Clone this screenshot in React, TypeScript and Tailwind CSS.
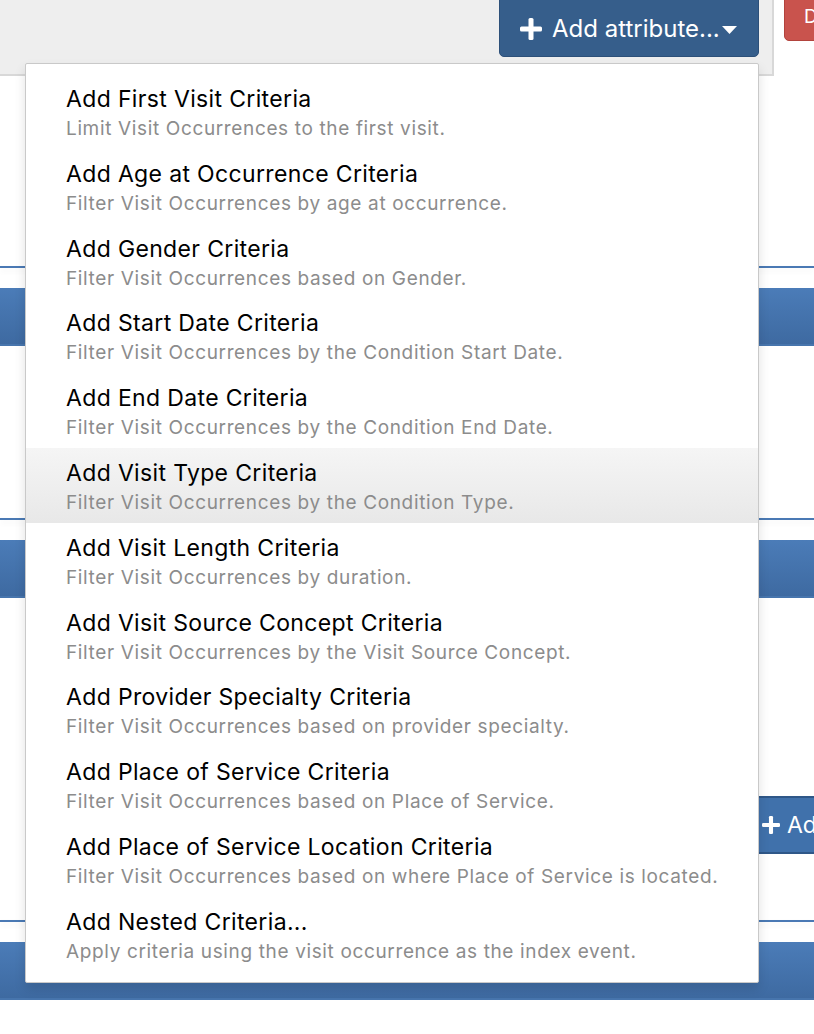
import React from 'react';

const items: { title: string; desc: string; active?: boolean }[] = [
  { title: 'Add First Visit Criteria', desc: 'Limit Visit Occurrences to the first visit.' },
  { title: 'Add Age at Occurrence Criteria', desc: 'Filter Visit Occurrences by age at occurrence.' },
  { title: 'Add Gender Criteria', desc: 'Filter Visit Occurrences based on Gender.' },
  { title: 'Add Start Date Criteria', desc: 'Filter Visit Occurrences by the Condition Start Date.' },
  { title: 'Add End Date Criteria', desc: 'Filter Visit Occurrences by the Condition End Date.' },
  { title: 'Add Visit Type Criteria', desc: 'Filter Visit Occurrences by the Condition Type.', active: true },
  { title: 'Add Visit Length Criteria', desc: 'Filter Visit Occurrences by duration.' },
  { title: 'Add Visit Source Concept Criteria', desc: 'Filter Visit Occurrences by the Visit Source Concept.' },
  { title: 'Add Provider Specialty Criteria', desc: 'Filter Visit Occurrences based on provider specialty.' },
  { title: 'Add Place of Service Criteria', desc: 'Filter Visit Occurrences based on Place of Service.' },
  { title: 'Add Place of Service Location Criteria', desc: 'Filter Visit Occurrences based on where Place of Service is located.' },
  { title: 'Add Nested Criteria...', desc: 'Apply criteria using the visit occurrence as the index event.' },
];

const PlusIcon: React.FC<{ size?: number }> = ({ size = 22 }) => (
  <svg width={size} height={size} viewBox="0 0 22 22" fill="white">
    <rect x="8.5" y="0" width="5" height="22" rx="1.5" />
    <rect x="0" y="8.5" width="22" height="5" rx="1.5" />
  </svg>
);

const Panel: React.FC<{}> = () => (
  <div>
    <div className="h-[2px] bg-[#4a79b4] shadow-[0_3px_6px_rgba(0,0,0,0.06)]" />
    <div className="mt-[20px] h-[58px] bg-gradient-to-b from-[#4b7cb8] to-[#3e6aa1] border-b-2 border-[#4775ad]" />
  </div>
);

const App: React.FC<{}> = () => {
  return (
    <div
      className="relative w-[814px] h-[1034px] overflow-hidden bg-white"
      style={{ fontFamily: 'Inter, "Liberation Sans", Arial, sans-serif' }}
    >
      {/* top toolbar */}
      <div className="flex items-start">
        <div className="shrink-0 w-[774px] h-[76px] bg-[#eeeeee] border-r-2 border-b-2 border-[#d8d8d8] flex justify-end pr-[13px]">
          <button className="-mt-[6px] h-[63px] w-[260px] shrink-0 rounded-[5px] bg-[#365e8b] border border-[#2d5079] flex items-center pl-[20px] pt-[6px] text-white text-[24px] whitespace-nowrap">
            <PlusIcon />
            <span className="ml-[10px]">Add attribute...</span>
            <svg width="15" height="8" viewBox="0 0 15 8" className="ml-[2px] mt-[3px] shrink-0" fill="white">
              <path d="M0 0 L15 0 L7.5 8 Z" />
            </svg>
          </button>
        </div>
        <div className="shrink-0 ml-[10px] -mt-[6px] h-[47px] w-[120px] rounded-[5px] bg-[#c9534d] border border-[#b2433d] pl-[19px] pt-[8px] text-white text-[19px] whitespace-nowrap">
          Delete
        </div>
      </div>

      <div className="mt-[190px]">
        <Panel />
      </div>
      <div className="mt-[172px]">
        <Panel />
      </div>

      <div className="mt-[198px] ml-[758px] h-[58px] w-[200px] bg-[#4071ab] border-t-2 border-b-2 border-[#2f5788] flex items-center pl-[4px] text-white text-[23px] whitespace-nowrap">
        <PlusIcon size={18} />
        <span className="ml-[7px]">Add criteria</span>
      </div>

      <div className="mt-[66px]">
        <Panel />
      </div>

      {/* dropdown menu */}
      <div className="absolute left-[25px] top-[63px] w-[734px] bg-white border border-[#c9c9c9] rounded-[2px] shadow-[0_6px_12px_rgba(0,0,0,0.12)] py-[10px]">
        {items.map((it) => (
          <div
            key={it.title}
            className={
              'h-[74.8px] pl-[40px] pt-[10px] ' +
              (it.active ? 'bg-gradient-to-b from-[#f5f5f5] to-[#e8e8e8]' : '')
            }
          >
            <div className="text-[23px] leading-[30px] tracking-[0.35px] text-black whitespace-nowrap">{it.title}</div>
            <div className="mt-[3px] text-[19px] leading-[24px] tracking-[0.64px] text-[#8c8c8c] whitespace-nowrap">{it.desc}</div>
          </div>
        ))}
      </div>
    </div>
  );
};

export default App;
